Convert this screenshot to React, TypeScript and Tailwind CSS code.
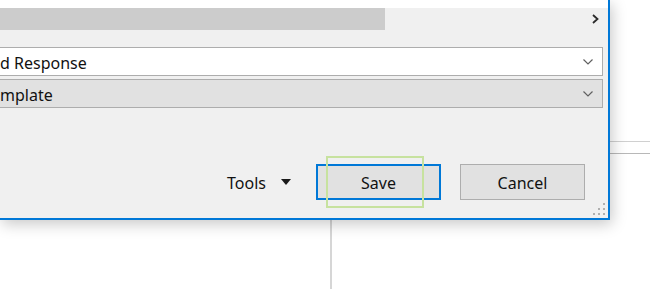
import React from 'react';

// dialog footer crop: tab strip, two dropdowns, Tools / Save / Cancel

const font = { fontFamily: '"Noto Sans", "Open Sans", sans-serif' };

function ChevronDown() {
  return (
    <svg width="10" height="6" viewBox="0 0 10 6" className="mr-[9px]">
      <path d="M0.5 0.5 L5 5 L9.5 0.5" fill="none" stroke="#606060" strokeWidth="1.2" />
    </svg>
  );
}

function Dropdown({ text, white }: { text: string; white?: boolean }) {
  return (
    <div
      className={`h-[29px] border border-l-0 border-[#adadad] flex items-center justify-between ${
        white ? 'bg-white' : 'bg-[#e1e1e1]'
      }`}
    >
      <span className="text-[16px] text-[#111] leading-none pt-[2px]">{text}</span>
      <ChevronDown />
    </div>
  );
}

function Grip() {
  const dots = [
    [10, 0],
    [5, 5],
    [10, 5],
    [0, 10],
    [5, 10],
    [10, 10],
  ];
  return (
    <svg width="12" height="12" viewBox="0 0 12 12">
      {dots.map(([x, y]) => (
        <rect key={`${x}-${y}`} x={x} y={y} width="2" height="2" fill="#b0b0b0" />
      ))}
    </svg>
  );
}

export default function App() {
  return (
    <div className="relative w-[650px] h-[289px] overflow-hidden bg-white" style={font}>
      {/* stuff behind the dialog */}
      <div className="absolute left-[330px] top-[210px] w-[2px] h-[90px] bg-[#d6d6d6]" />
      <div className="absolute left-[600px] top-[141px] w-[60px] h-[1px] bg-[#d0d0d0]" />
      <div className="absolute left-[600px] top-[153px] w-[60px] h-[1px] bg-[#b8b8b8]" />

      {/* dialog */}
      <div className="absolute left-0 top-0 w-[610px] h-[220px] bg-[#f0f0f0] border-r-2 border-b-2 border-[#0078d7] shadow-[2px_4px_14px_rgba(0,0,0,0.22)] flex flex-col">
        <div className="h-[8px] bg-white" />
        <div className="h-[22px] flex items-center justify-between">
          <div className="w-[385px] h-full bg-[#cccccc]" />
          <svg width="7" height="10" viewBox="0 0 7 10" className="mr-[9px]">
            <path d="M1 1 L5.5 5 L1 9" fill="none" stroke="#2b2b2b" strokeWidth="1.8" />
          </svg>
        </div>

        <div className="mt-[17px] pr-[5px] flex flex-col gap-[3px]">
          <Dropdown text="d Response" white />
          <Dropdown text="mplate" />
        </div>

        <div className="mt-[56px] pr-[23px] flex items-center justify-end">
          <span className="text-[16px] text-[#111] pt-[2px]">Tools</span>
          <svg width="10" height="6" viewBox="0 0 10 6" className="ml-[15px]">
            <path d="M0 0 H10 L5 6 Z" fill="#1a1a1a" />
          </svg>
          <button className="ml-[25px] w-[125px] h-[36px] pt-[2px] border-2 border-[#0078d7] bg-[#e1e1e1] text-[16px] text-[#111]">
            Save
          </button>
          <button className="ml-[19px] w-[125px] h-[36px] pt-[2px] border border-[#adadad] bg-[#e1e1e1] text-[16px] text-[#111]">
            Cancel
          </button>
        </div>

        <div className="absolute right-[3px] bottom-[3px]">
          <Grip />
        </div>
      </div>

      {/* highlight box over the Save button */}
      <div className="absolute left-[326px] top-[156px] w-[98px] h-[52px] border-2 border-[#c7e29f]" />
    </div>
  );
}
